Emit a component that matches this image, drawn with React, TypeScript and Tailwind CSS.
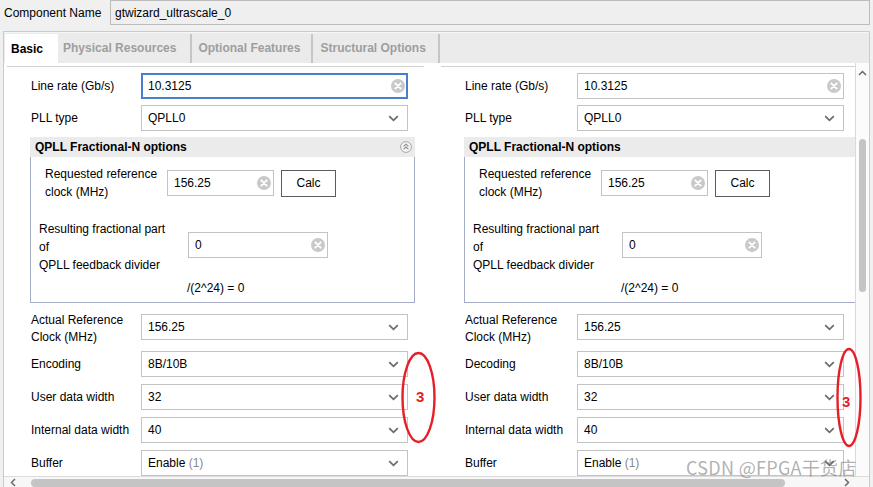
import React from "react";

const ClearIcon = () => (
  <svg width="14" height="14" viewBox="0 0 14 14" className="shrink-0">
    <circle cx="7" cy="7" r="7" fill="#c9c9c9" />
    <path d="M4.3 4.3 L9.7 9.7 M9.7 4.3 L4.3 9.7" stroke="#ffffff" strokeWidth="1.9" strokeLinecap="round" />
  </svg>
);

const Chevron = () => (
  <svg width="11" height="7" viewBox="0 0 11 7" className="shrink-0">
    <path d="M1.2 1.2 L5.5 5.3 L9.8 1.2" stroke="#6a6a6a" strokeWidth="1.7" fill="none" />
  </svg>
);

const CollapseIcon = () => (
  <svg width="12" height="12" viewBox="0 0 12 12">
    <circle cx="6" cy="6" r="5.4" fill="#f4f4f4" stroke="#a8a8a8" strokeWidth="1" />
    <path d="M3.6 5.4 L6 3.2 L8.4 5.4 M3.6 8.2 L6 6 L8.4 8.2" stroke="#8a8a8a" strokeWidth="1.1" fill="none" />
  </svg>
);

function TextInput({ value, w, focused }: { value: string; w: string; focused?: boolean }) {
  return (
    <div
      className={
        (focused ? "border-2 border-[#4b7dcf] pl-[5px] pr-[1px] " : "border border-[#c3c3c3] pl-[6px] pr-[2px] ") +
        w +
        " h-[26px] bg-white flex items-center justify-between"
      }
    >
      <span>{value}</span>
      <ClearIcon />
    </div>
  );
}

function Select({ children }: { children: React.ReactNode }) {
  return (
    <div className="w-[267px] h-[26px] border border-[#c3c3c3] bg-white flex items-center justify-between pl-[6px] pr-[8px]">
      <span>{children}</span>
      <Chevron />
    </div>
  );
}

function Row({
  label,
  mt,
  lw,
  children,
}: {
  label: React.ReactNode;
  mt: string;
  lw: string;
  children: React.ReactNode;
}) {
  return (
    <div className={"flex h-[26px] items-center pl-[27px] shrink-0 " + mt}>
      <div className={lw + " shrink-0"}>{label}</div>
      {children}
    </div>
  );
}

function Panel({ right }: { right?: boolean }) {
  const lw = right ? "w-[112px]" : "w-[110px]";
  return (
    <div className={(right ? "w-[417px]" : "w-[434px]") + " shrink-0 h-full overflow-hidden bg-white flex flex-col"}>
      <div className={"mt-[3px] ml-[3px] h-px bg-[#d0d0d0] shrink-0 " + (right ? "w-[414px]" : "w-[417px]")} />
      <Row label="Line rate (Gb/s)" mt="mt-[6px]" lw={lw}>
        <TextInput value="10.3125" w="w-[267px]" focused={!right} />
      </Row>
      <Row label="PLL type" mt="mt-[6px]" lw={lw}>
        <Select>QPLL0</Select>
      </Row>
      <div
        className={
          "mt-[6px] ml-[26px] h-[20px] bg-[#ebebeb] flex items-center justify-between pl-[5px] pr-[3px] font-bold shrink-0 " +
          (right ? "w-[395px]" : "w-[385px]")
        }
      >
        <span>QPLL Fractional-N options</span>
        {!right && <CollapseIcon />}
      </div>
      <div
        className={
          "ml-[26px] h-[146px] pt-[8px] border-x border-b border-[#a6acc4] flex flex-col shrink-0 " +
          (right ? "w-[395px]" : "w-[385px]")
        }
      >
        <div className="flex items-center h-[36px] pl-[14px] shrink-0">
          <div className="w-[122px] shrink-0 leading-[18px]">
            Requested reference
            <br />
            clock (MHz)
          </div>
          <TextInput value="156.25" w="w-[107px]" />
          <div className="ml-[7px] w-[55px] h-[27px] border border-[#5c5c5c] bg-white flex items-center justify-center">
            Calc
          </div>
        </div>
        <div className="mt-[19px] flex items-start pl-[8px] shrink-0">
          <div className="w-[149px] shrink-0 leading-[18px]">
            Resulting fractional part
            <br />
            of
            <br />
            QPLL feedback divider
          </div>
          <div className="mt-[12px]">
            <TextInput value="0" w="w-[140px]" />
          </div>
        </div>
        <div className="mt-[5px] pl-[156px] leading-[18px] shrink-0">/(2^24) = 0</div>
      </div>
      <div className="flex h-[26px] items-center pl-[27px] mt-[11px] shrink-0">
        <div className={lw + " shrink-0 leading-[17px] pt-[3px]"}>
          Actual Reference
          <br />
          Clock (MHz)
        </div>
        <Select>156.25</Select>
      </div>
      <Row label={right ? "Decoding" : "Encoding"} mt="mt-[11px]" lw={lw}>
        <Select>8B/10B</Select>
      </Row>
      <Row label="User data width" mt="mt-[7px]" lw={lw}>
        <Select>32</Select>
      </Row>
      <Row label="Internal data width" mt="mt-[7px]" lw={lw}>
        <Select>40</Select>
      </Row>
      <Row label="Buffer" mt="mt-[7px]" lw={lw}>
        <Select>
          Enable <span className="text-[#8a8a8a]">(1)</span>
        </Select>
      </Row>
    </div>
  );
}

export default function App() {
  return (
    <div className="w-[873px] h-[487px] bg-[#f0f0f0] relative overflow-hidden font-['Liberation_Sans',Arial,sans-serif] text-[12px] text-black">
      {/* Component name */}
      <div className="flex items-center h-[26px]">
        <div className="pl-[4px] w-[110px] shrink-0">Component Name</div>
        <div className="w-[760px] h-[25px] self-start border border-[#bcbcbc] bg-[#efefef] flex items-center pl-[4px]">
          gtwizard_ultrascale_0
        </div>
      </div>

      {/* Tab container */}
      <div className="mt-[5px] ml-[3px] w-[867px] h-[460px] border-t border-x border-[#cbcbcb] flex flex-col">
        <div className="h-[31px] bg-[#ebebeb] border-t border-[#f6f6f6] flex items-end font-bold shrink-0">
          <div className="ml-[1px] h-[29px] bg-white flex items-center pl-[6px] pr-[15px]">Basic</div>
          <div className="h-[29px] flex items-center pl-[5px] pr-[14px] text-[#9e9e9e] border-r-2 border-[#c6c6c6]">
            <span className="mb-[2px]">Physical Resources</span>
          </div>
          <div className="h-[29px] flex items-center pl-[6px] pr-[11px] text-[#9e9e9e] border-r-2 border-[#c6c6c6]">
            <span className="mb-[2px]">Optional Features</span>
          </div>
          <div className="h-[29px] flex items-center pl-[7px] pr-[12px] text-[#9e9e9e] border-r-2 border-[#c6c6c6]">
            <span className="mb-[2px]">Structural Options</span>
          </div>
        </div>

        {/* Content */}
        <div className="h-[413px] flex shrink-0">
          <Panel />
          <Panel right />
          <div className="w-[14px] shrink-0 bg-[#fbfbfb] border-l border-[#dadada] flex flex-col items-center">
            <svg width="9" height="6" viewBox="0 0 9 6" className="mt-[7px]">
              <path d="M1 5 L4.5 1.5 L8 5" stroke="#6a6a6a" strokeWidth="1.5" fill="none" />
            </svg>
            <div className="mt-[63px] w-[7px] h-[153px] rounded-full bg-[#c4c4c4]" />
          </div>
        </div>

        {/* Horizontal scrollbar */}
        <div className="h-[12px] border-t border-[#dcdcdc] bg-[#f7f7f7] flex items-center shrink-0">
          <svg width="6" height="9" viewBox="0 0 6 9" className="ml-[6px]">
            <path d="M5 1 L1.5 4.5 L5 8" stroke="#6a6a6a" strokeWidth="1.5" fill="none" />
          </svg>
          <div className="ml-[15px] w-[754px] h-[8px] rounded-full bg-[#c4c4c4]" />
          <svg width="6" height="9" viewBox="0 0 6 9" className="ml-[59px]">
            <path d="M1 1 L4.5 4.5 L1 8" stroke="#6a6a6a" strokeWidth="1.5" fill="none" />
          </svg>
        </div>
      </div>

      {/* Annotations */}
      <svg className="absolute left-[400px] top-[351px]" width="37" height="93" viewBox="0 0 37 93">
        <ellipse cx="18.5" cy="46.5" rx="16" ry="44.5" fill="none" stroke="#e61e2a" strokeWidth="2.4" />
      </svg>
      <div className="absolute left-[416px] top-[387px] text-[#e61e2a] font-bold text-[15px] leading-[20px]">3</div>
      <svg className="absolute left-[835px] top-[347px]" width="28" height="101" viewBox="0 0 28 101">
        <ellipse cx="14" cy="50.5" rx="11.5" ry="48.5" fill="none" stroke="#e61e2a" strokeWidth="2.4" />
      </svg>
      <div className="absolute left-[842px] top-[392px] text-[#e61e2a] font-bold text-[15px] leading-[20px]">3</div>

      {/* Watermark */}
      <div className="absolute left-[686px] top-[455px] text-[18px] leading-[24px] tracking-[0.3px] text-[rgba(110,110,110,0.55)] font-['Noto_Sans_CJK_SC',sans-serif] whitespace-nowrap">
        CSDN @FPGA干货店
      </div>
    </div>
  );
}
